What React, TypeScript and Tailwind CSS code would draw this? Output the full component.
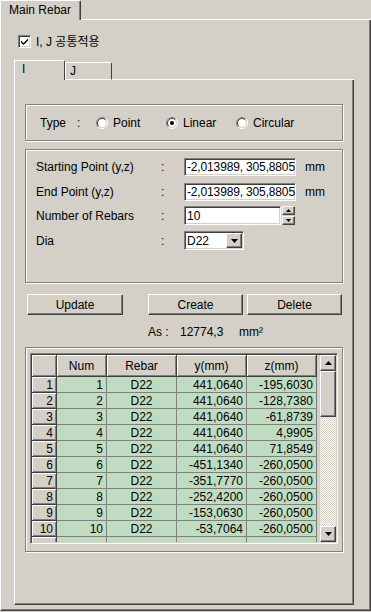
import React from "react";

// classic win32 bevels
const raised =
  "border border-t-white border-l-white border-r-[#404040] border-b-[#404040] shadow-[inset_-1px_-1px_0_#808080]";
const sunken =
  "border border-t-[#808080] border-l-[#808080] border-r-white border-b-white shadow-[inset_1px_1px_0_#404040,inset_-1px_-1px_0_#d4d0c8]";
const etched = "border border-[#808080] shadow-[inset_1px_1px_0_#fff,1px_1px_0_#fff]";

const rows: string[][] = [
  ["1", "1", "D22", "441,0640", "-195,6030"],
  ["2", "2", "D22", "441,0640", "-128,7380"],
  ["3", "3", "D22", "441,0640", "-61,8739"],
  ["4", "4", "D22", "441,0640", "4,9905"],
  ["5", "5", "D22", "441,0640", "71,8549"],
  ["6", "6", "D22", "-451,1340", "-260,0500"],
  ["7", "7", "D22", "-351,7770", "-260,0500"],
  ["8", "8", "D22", "-252,4200", "-260,0500"],
  ["9", "9", "D22", "-153,0630", "-260,0500"],
  ["10", "10", "D22", "-53,7064", "-260,0500"],
  // next row only peeks in under the last one, its text stays out of view
  ["", "", "", "", ""],
];

const Radio = ({ on }: { on?: boolean }) => (
  <svg width="12" height="12" viewBox="0 0 12 12" className="shrink-0">
    <circle cx="6" cy="6" r="4.5" fill="#fff" />
    <path d="M2.1 9.9A5.5 5.5 0 0 1 9.9 2.1" fill="none" stroke="#808080" />
    <path d="M9.9 2.1A5.5 5.5 0 0 1 2.1 9.9" fill="none" stroke="#fff" />
    <path d="M2.8 9.2A4.5 4.5 0 0 1 9.2 2.8" fill="none" stroke="#404040" />
    <path d="M9.2 2.8A4.5 4.5 0 0 1 2.8 9.2" fill="none" stroke="#d4d0c8" />
    {on && <circle cx="6" cy="6" r="2" fill="#000" />}
  </svg>
);

const Tri = ({ down, w = 7, h = 4 }: { down?: boolean; w?: number; h?: number }) => (
  <svg width={w} height={h} viewBox={`0 0 ${w} ${h}`}>
    <polygon points={down ? `0,0 ${w},0 ${w / 2},${h}` : `0,${h} ${w},${h} ${w / 2},0`} fill="#000" />
  </svg>
);

const App: React.FC = () => {
  return (
    <div className="w-[371px] h-[612px] bg-[#d4d0c8] flex flex-col overflow-hidden text-[12px] text-black font-['Liberation_Sans','Noto_Sans_CJK_KR',sans-serif]">
      {/* top tab strip */}
      <div className="flex h-[20px] shrink-0">
        <div className="w-[81px] h-[20px] border-l border-t border-white border-r border-r-[#404040] shadow-[inset_-1px_0_0_#808080] rounded-tr-[2px] pl-[8px] flex items-center pb-[1px]">
          Main Rebar
        </div>
        <div className="flex-1 h-[20px] border-b border-white" />
      </div>

      {/* outer page */}
      <div className="h-[591px] border-l border-white border-r border-b border-r-[#404040] border-b-[#404040] shadow-[inset_-1px_-1px_0_#808080] flex flex-col">
        <div className="mt-[15px] ml-[17px] h-[13px] flex items-center gap-[5px]">
          <div className={`w-[13px] h-[13px] bg-white ${sunken} flex items-center justify-center`}>
            <svg width="7" height="7" viewBox="0 0 7 7">
              <polygon points="0,2.5 2.5,5 7,0.5 7,2.5 2.5,7 0,4.5" fill="#000" />
            </svg>
          </div>
          <span>I, J 공통적용</span>
        </div>

        {/* inner tabs */}
        <div className="mt-[12px] ml-[13px] w-[340px] h-[20px] flex items-end shrink-0">
          <div className="w-[51px] h-[20px] border-l border-t border-white border-r border-r-[#404040] rounded-tr-[2px] pl-[7px] pb-[3px] flex items-center">
            I
          </div>
          <div className="w-[47px] h-[18px] border-l border-t border-b border-white border-r border-r-[#404040] rounded-tr-[2px] pl-[4px] flex items-center">
            J
          </div>
          <div className="flex-1 h-[18px] border-b border-white" />
        </div>

        <div className="ml-[13px] w-[340px] h-[525px] border-l border-white border-r border-b border-r-[#404040] border-b-[#404040] shadow-[inset_-1px_-1px_0_#808080] flex flex-col">
          {/* Type */}
          <div className={`ml-[10px] mt-[24px] w-[318px] h-[37px] ${etched} flex items-center pl-[14px]`}>
            <span className="w-[37px]">Type</span>
            <span className="w-[19px]">:</span>
            <div className="w-[70px] flex items-center gap-[5px]">
              <Radio />
              Point
            </div>
            <div className="w-[70px] flex items-center gap-[5px]">
              <Radio on />
              Linear
            </div>
            <div className="flex items-center gap-[5px]">
              <Radio />
              Circular
            </div>
          </div>

          {/* points */}
          <div className={`ml-[10px] mt-[8px] w-[318px] h-[134px] ${etched} pl-[10px] pt-[8px] flex flex-col`}>
            <div className="flex items-center h-[18px]">
              <span className="w-[125px]">Starting Point (y,z)</span>
              <span className="w-[23px]">:</span>
              <div className={`w-[112px] h-[18px] bg-white ${sunken} pl-[2px] flex items-center whitespace-nowrap overflow-hidden tracking-[-0.15px]`}>
                -2,013989, 305,8805
              </div>
              <span className="ml-[9px]">mm</span>
            </div>
            <div className="flex items-center h-[18px] mt-[7px]">
              <span className="w-[125px]">End Point (y,z)</span>
              <span className="w-[23px]">:</span>
              <div className={`w-[112px] h-[18px] bg-white ${sunken} pl-[2px] flex items-center whitespace-nowrap overflow-hidden tracking-[-0.15px]`}>
                -2,013989, 305,8805
              </div>
              <span className="ml-[9px]">mm</span>
            </div>
            <div className="flex items-center h-[19px] mt-[5px]">
              <span className="w-[125px]">Number of Rebars</span>
              <span className="w-[23px]">:</span>
              <div className={`w-[97px] h-[19px] bg-white ${sunken} pl-[2px] flex items-center`}>10</div>
              <div className="ml-[1px] flex flex-col gap-[1px]">
                <div className={`w-[13px] h-[9px] ${raised} flex items-center justify-center`}>
                  <Tri w={5} h={3} />
                </div>
                <div className={`w-[13px] h-[9px] ${raised} flex items-center justify-center`}>
                  <Tri down w={5} h={3} />
                </div>
              </div>
            </div>
            <div className="flex items-center h-[19px] mt-[6px]">
              <span className="w-[125px]">Dia</span>
              <span className="w-[23px]">:</span>
              <div className={`w-[60px] h-[19px] bg-white ${sunken} p-[1px] flex items-center`}>
                <span className="flex-1 pl-[1px]">D22</span>
                <div className={`w-[16px] h-[15px] bg-[#d4d0c8] ${raised} flex items-center justify-center`}>
                  <Tri down />
                </div>
              </div>
            </div>
          </div>

          {/* buttons */}
          <div className="mt-[11px] h-[21px] flex">
            <button className={`ml-[12px] w-[96px] h-[21px] ${raised} flex items-center justify-center`}>Update</button>
            <button className={`ml-[25px] w-[95px] h-[21px] ${raised} flex items-center justify-center`}>Create</button>
            <button className={`ml-[4px] w-[95px] h-[21px] ${raised} flex items-center justify-center`}>Delete</button>
          </div>

          <div className="mt-[10px] h-[14px] ml-[133px] flex items-center">
            <span className="w-[32px]">As :</span>
            <span className="w-[59px]">12774,3</span>
            <span>mm²</span>
          </div>

          {/* grid */}
          <div className={`ml-[10px] mt-[8px] w-[318px] h-[205px] ${etched} pl-[4px] pt-[5px]`}>
            <div className={`w-[308px] h-[191px] ${sunken} p-[1px] flex bg-[#d4d0c8]`}>
              <div className="w-[288px] h-[187px] overflow-hidden flex flex-col">
                <div className="flex h-[22px] shrink-0">
                  <div className="w-[25px] h-full border-r border-b border-[#404040] shadow-[inset_1px_1px_0_#fff,inset_-1px_-1px_0_#808080]" />
                  <div className="w-[50px] h-full border-r border-b border-[#404040] shadow-[inset_1px_1px_0_#fff,inset_-1px_-1px_0_#808080] flex items-center justify-center">Num</div>
                  <div className="w-[70px] h-full border-r border-b border-[#404040] shadow-[inset_1px_1px_0_#fff,inset_-1px_-1px_0_#808080] flex items-center justify-center">Rebar</div>
                  <div className="w-[70px] h-full border-r border-b border-[#404040] shadow-[inset_1px_1px_0_#fff,inset_-1px_-1px_0_#808080] flex items-center justify-center">y(mm)</div>
                  <div className="w-[70px] h-full border-r border-b border-[#404040] shadow-[inset_1px_1px_0_#fff,inset_-1px_-1px_0_#808080] flex items-center justify-center">z(mm)</div>
                </div>
                {rows.map((r, i) => (
                  <div key={i} className="flex h-[16px] shrink-0">
                    <div className="w-[25px] h-full border-r border-b border-[#404040] shadow-[inset_1px_1px_0_#fff,inset_-1px_-1px_0_#808080] flex items-center justify-end pr-[3px]">
                      {r[0]}
                    </div>
                    <div className="w-[50px] h-full bg-[#c0dcc0] border-r border-b border-[#808080] flex items-center justify-end pr-[3px]">
                      {r[1]}
                    </div>
                    <div className="w-[70px] h-full bg-[#c0dcc0] border-r border-b border-[#808080] flex items-center justify-center">
                      {r[2]}
                    </div>
                    <div className="w-[70px] h-full bg-[#c0dcc0] border-r border-b border-[#808080] flex items-center justify-end pr-[3px]">
                      {r[3]}
                    </div>
                    <div className="w-[70px] h-full bg-[#c0dcc0] border-r border-b border-[#808080] flex items-center justify-end pr-[3px]">
                      {r[4]}
                    </div>
                  </div>
                ))}
              </div>
              {/* scrollbar */}
              <div className="w-[16px] h-[187px] flex flex-col">
                <div className={`h-[16px] ${raised} flex items-center justify-center`}>
                  <Tri />
                </div>
                <div className={`h-[46px] ${raised}`} />
                <div className="flex-1 bg-[image:repeating-conic-gradient(#d4d0c8_0%_25%,#ffffff_0%_50%)] bg-[length:2px_2px]" />
                <div className={`h-[16px] ${raised} flex items-center justify-center`}>
                  <Tri down />
                </div>
              </div>
            </div>
          </div>
        </div>
      </div>
    </div>
  );
};

export default App;
